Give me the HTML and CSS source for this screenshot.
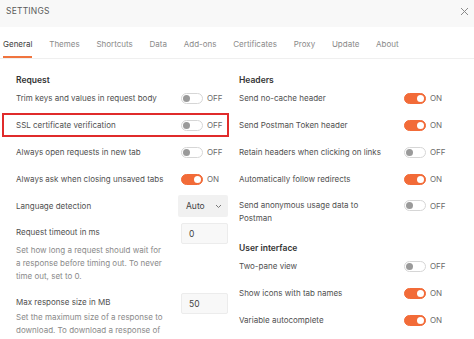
FILE: index.html
```html
<!DOCTYPE html>
<html>
<head>
<meta charset="utf-8">
<link rel="stylesheet" href="styles.css">
</head>
<body>
<header class="titlebar">
  <span class="title">SETTINGS</span>
  <svg class="close" width="9" height="9" viewBox="0 0 9 9"><path d="M1 1L8 8M8 1L1 8" stroke="#8a8a8a" stroke-width="1"/></svg>
</header>
<nav class="tabs">
  <span class="tab active">General</span>
  <span class="tab">Themes</span>
  <span class="tab">Shortcuts</span>
  <span class="tab">Data</span>
  <span class="tab">Add-ons</span>
  <span class="tab">Certificates</span>
  <span class="tab">Proxy</span>
  <span class="tab">Update</span>
  <span class="tab">About</span>
</nav>
<main class="content">
  <section class="col col-left">
    <h3 class="section-title">Request</h3>
    <div class="row"><span class="label">Trim keys and values in request body</span><span class="ctrl"><span class="toggle"></span><span class="state">OFF</span></span></div>
    <div class="row highlighted"><span class="label">SSL certificate verification</span><span class="ctrl"><span class="toggle"></span><span class="state">OFF</span></span></div>
    <div class="row"><span class="label">Always open requests in new tab</span><span class="ctrl"><span class="toggle"></span><span class="state">OFF</span></span></div>
    <div class="row"><span class="label">Always ask when closing unsaved tabs</span><span class="ctrl"><span class="toggle on"></span><span class="state">ON</span></span></div>
    <div class="row"><span class="label">Language detection</span><span class="ctrl"><span class="select">Auto<svg class="chev" width="7" height="5" viewBox="0 0 7 5"><path d="M1 1L3.5 3.5L6 1" fill="none" stroke="#777" stroke-width="1"/></svg></span></span></div>
    <div class="field">
      <span class="field-label">Request timeout in ms</span>
      <span class="input">0</span>
      <p class="desc">Set how long a request should wait for a response before timing out. To never time out, set to 0.</p>
    </div>
    <div class="field second">
      <span class="field-label">Max response size in MB</span>
      <span class="input">50</span>
      <p class="desc">Set the maximum size of a response to download. To download a response of</p>
    </div>
  </section>
  <section class="col col-right">
    <h3 class="section-title">Headers</h3>
    <div class="row"><span class="label">Send no-cache header</span><span class="ctrl"><span class="toggle on"></span><span class="state">ON</span></span></div>
    <div class="row"><span class="label">Send Postman Token header</span><span class="ctrl"><span class="toggle on"></span><span class="state">ON</span></span></div>
    <div class="row"><span class="label">Retain headers when clicking on links</span><span class="ctrl"><span class="toggle"></span><span class="state">OFF</span></span></div>
    <div class="row"><span class="label">Automatically follow redirects</span><span class="ctrl"><span class="toggle on"></span><span class="state">ON</span></span></div>
    <div class="row tall"><span class="label">Send anonymous usage data to Postman</span><span class="ctrl"><span class="toggle"></span><span class="state">OFF</span></span></div>
    <h3 class="section-title ui-title">User interface</h3>
    <div class="row"><span class="label">Two-pane view</span><span class="ctrl"><span class="toggle"></span><span class="state">OFF</span></span></div>
    <div class="row"><span class="label">Show icons with tab names</span><span class="ctrl"><span class="toggle on"></span><span class="state">ON</span></span></div>
    <div class="row"><span class="label">Variable autocomplete</span><span class="ctrl"><span class="toggle on"></span><span class="state">ON</span></span></div>
  </section>
</main>
</body>
</html>
```
FILE: styles.css
```css
* { box-sizing: border-box; }
html, body { margin: 0; padding: 0; background: #fff; overflow: hidden; }
body {
  font-family: Inter, "Noto Sans", sans-serif;
  font-size: 8px;
  color: #505050;
  width: 474px;
  height: 339px;
}
.titlebar {
  height: 27px;
  background: #f8f8f8;
  display: flex;
  align-items: center;
  justify-content: space-between;
  padding: 0 5px 5px 6px;
}
.title { font-size: 8.5px; color: #5a5a5a; letter-spacing: 0.2px; }
.tabs {
  display: flex;
  gap: 16.75px;
  padding: 0 0 0 3px;
  height: 32px;
  align-items: stretch;
  border-bottom: 1px solid #efefef;
}
.tab {
  display: flex;
  align-items: center;
  padding-top: 4px;
  font-size: 8px;
  color: #8a8a8a;
  border-bottom: 2px solid transparent;
}
.tab.active { color: #3c3c3c; border-bottom-color: #f0743e; }
.content {
  display: flex;
  gap: 11px;
  padding: 14px 0 0 3px;
}
.col { display: flex; flex-direction: column; gap: 5px; }
.col-left { width: 225px; }
.col-right { width: 211px; }
.section-title {
  margin: 0;
  font-size: 8.5px;
  font-weight: 600;
  color: #333;
  line-height: 14px;
  height: 14px;
  margin-bottom: -5px;
}
.col-left .section-title, .col-left .row, .col-left .field { padding-left: 13px; }
.row {
  display: grid;
  grid-template-columns: 1fr 47px;
  align-items: center;
  min-height: 22px;
}
.col-right .row { grid-template-columns: 150px 1fr; column-gap: 15px; }
.row.tall { align-items: start; padding-top: 4px; padding-bottom: 4px; }
.row.tall .label { line-height: 13px; }
.row.tall .ctrl { margin-top: 1px; }
.ui-title { margin-top: 7px; }
.row.highlighted { outline: 2px solid #e02b2b; outline-offset: -1px; }
.label { line-height: 13px; }
.ctrl { display: flex; align-items: center; gap: 4px; }
.toggle {
  width: 22px;
  height: 11px;
  border-radius: 6px;
  border: 1px solid #d6d6d6;
  background: #fff;
  position: relative;
  flex: none;
}
.toggle::after {
  content: "";
  position: absolute;
  top: 1px;
  left: 1px;
  width: 7px;
  height: 7px;
  border-radius: 50%;
  background: #9a9a9a;
}
.toggle.on { background: #f26b38; border-color: #f26b38; }
.toggle.on::after { left: auto; right: 1px; background: #fff; }
.state { font-size: 8px; color: #6a6a6a; }
.select {
  margin-left: -3px;
  width: 50px;
  height: 22px;
  background: #f1f1f1;
  border-radius: 2px;
  display: flex;
  align-items: center;
  justify-content: space-between;
  padding: 0 6px 0 8px;
  font-size: 8.5px;
  color: #444;
}
.field {
  display: grid;
  grid-template-columns: 1fr 47px;
}
.field.second { margin-top: 4px; }
.field-label { line-height: 20px; grid-column: 1; grid-row: 1; }
.input {
  grid-column: 2;
  grid-row: 1;
  height: 21px;
  margin-top: 1px;
  background: #f8f8f8;
  border: 1px solid #ececec;
  border-radius: 2px;
  display: flex;
  align-items: center;
  padding-left: 7px;
  font-size: 8.5px;
  color: #444;
}
.desc {
  grid-column: 1;
  grid-row: 2;
  margin: 0;
  line-height: 13px;
  color: #8a8a8a;
  padding-right: 15px;
}
.field.second .desc { margin-top: -3px; }
```
